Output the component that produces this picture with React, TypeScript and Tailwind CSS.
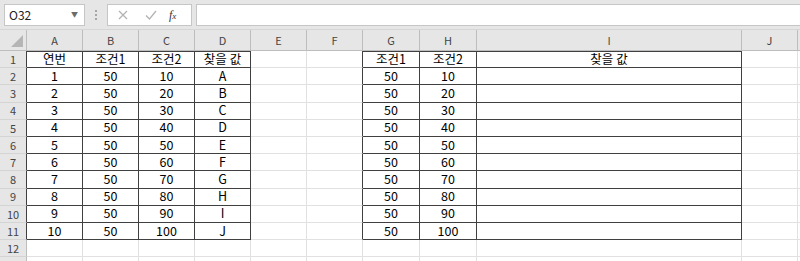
import React from "react";

const COLS = ["A", "B", "C", "D", "E", "F", "G", "H", "I", "J"];
const WIDTHS = ["w-[56px]", "w-[56px]", "w-[56px]", "w-[56px]", "w-[56px]", "w-[56px]", "w-[57px]", "w-[57px]", "w-[265px]", "w-[56px]"];

const LETTERS = ["A", "B", "C", "D", "E", "F", "G", "H", "I", "J"];

// table regions: cols 0-3 (A-D) and 6-8 (G-I), rows 1..11
function inTable(col: number, row: number) {
  return row >= 1 && row <= 11 && ((col >= 0 && col <= 3) || (col >= 6 && col <= 8));
}

function cellValue(col: number, row: number): string {
  if (row === 1) {
    return ["연번", "조건1", "조건2", "찾을 값", "", "", "조건1", "조건2", "찾을 값", ""][col];
  }
  if (row >= 2 && row <= 11) {
    const n = row - 1;
    switch (col) {
      case 0:
        return String(n);
      case 1:
        return "50";
      case 2:
        return String(n * 10);
      case 3:
        return LETTERS[n - 1];
      case 6:
        return "50";
      case 7:
        return String(n * 10);
    }
  }
  return "";
}

function FormulaBar() {
  return (
    <div className="flex h-[30px] items-center bg-[#e6e6e6] border-b border-[#d6d6d6]">
      <div className="ml-[4px] flex h-[22px] w-[81px] items-center justify-between border border-[#c6c6c6] bg-white pl-[4px] pr-[6px]">
        <span className="text-[12px] text-[#222]">O32</span>
        <span className="text-[7px] text-[#6b6b6b]">▼</span>
      </div>
      <div className="flex w-[22px] flex-col items-center gap-[2px]">
        <span className="h-[2px] w-[2px] bg-[#a6a6a6]" />
        <span className="h-[2px] w-[2px] bg-[#a6a6a6]" />
        <span className="h-[2px] w-[2px] bg-[#a6a6a6]" />
      </div>
      <div className="flex h-[22px] w-[85px] items-center border border-[#c6c6c6] bg-white">
        <svg width="28" height="20" viewBox="0 0 28 20" className="ml-[1px]">
          <path d="M10 6 L18 14 M18 6 L10 14" stroke="#b3b3b3" strokeWidth="1.3" fill="none" />
        </svg>
        <svg width="28" height="20" viewBox="0 0 28 20">
          <path d="M9 10.5 L12.5 14 L19 6" stroke="#b3b3b3" strokeWidth="1.3" fill="none" />
        </svg>
        <span className="ml-[4px] font-['Liberation_Serif',serif] text-[12px] italic text-[#333]">
          f<span className="text-[9px]">x</span>
        </span>
      </div>
      <div className="ml-[4px] h-[22px] flex-1 border border-r-0 border-[#c6c6c6] bg-white" />
    </div>
  );
}

function HeaderRow() {
  return (
    <div className="flex h-[21px] bg-[#e6e6e6]">
      <div className="relative h-full w-[27px] shrink-0 border-b border-r border-[#bdbdbd]">
        <svg width="12" height="12" viewBox="0 0 12 12" className="absolute bottom-[3px] right-[3px]">
          <path d="M12 0 L12 12 L0 12 Z" fill="#b5b5b5" />
        </svg>
      </div>
      {COLS.map((c, i) => (
        <div
          key={c}
          className={`${WIDTHS[i]} flex h-full shrink-0 items-center justify-center border-b border-r border-[#bdbdbd] text-[11px] text-[#444]`}
        >
          {c}
        </div>
      ))}
      <div className="h-full flex-1 border-b border-[#bdbdbd]" />
    </div>
  );
}

function SheetRow({ row }: { row: number }) {
  const tableRow = row >= 1 && row <= 11;
  return (
    <div className="flex h-[17.2px]">
      <div
        className={`flex h-full w-[27px] shrink-0 items-center justify-center border-b border-[#d4d4d4] bg-[#e6e6e6] text-[11px] text-[#444] border-r ${
          tableRow ? "border-r-[#404040]" : "border-r-[#bdbdbd]"
        }`}
      >
        {row <= 12 ? row : ""}
      </div>
      {COLS.map((c, i) => {
        const t = inTable(i, row);
        const nextT = inTable(i + 1, row);
        const belowT = inTable(i, row + 1);
        const right = t || nextT ? "border-r-[#404040]" : "border-r-[#e1e1e1]";
        const bottom = t || belowT ? "border-b-[#404040]" : "border-b-[#e1e1e1]";
        const top = t && row === 1 ? "shadow-[inset_0_1px_0_#404040]" : "";
        return (
          <div
            key={c}
            className={`${WIDTHS[i]} flex h-full shrink-0 items-center justify-center border-b border-r ${right} ${bottom} ${top} text-[12.5px] text-black`}
          >
            {cellValue(i, row)}
          </div>
        );
      })}
      <div className="h-full flex-1 border-b border-[#e1e1e1]" />
    </div>
  );
}

export default function App() {
  const rows = Array.from({ length: 13 }, (_, i) => i + 1);
  return (
    <div className="h-[261px] w-[800px] overflow-hidden bg-white font-['Noto_Sans_CJK_KR','Noto_Sans',sans-serif]">
      <FormulaBar />
      <HeaderRow />
      {rows.map((r) => (
        <SheetRow key={r} row={r} />
      ))}
    </div>
  );
}
